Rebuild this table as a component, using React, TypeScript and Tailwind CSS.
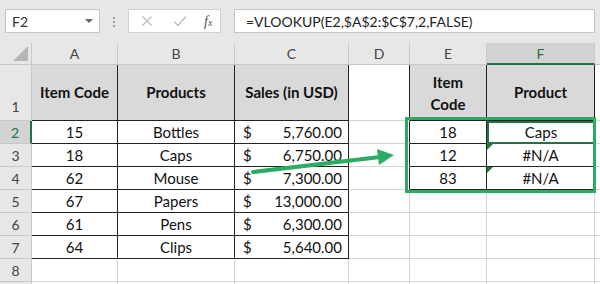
const cols = ["A", "B", "C", "D", "E", "F"];

const rows = [
  { n: 2, a: "15", b: "Bottles", c: "5,760.00", e: "18", f: "Caps" },
  { n: 3, a: "18", b: "Caps", c: "6,750.00", e: "12", f: "#N/A" },
  { n: 4, a: "62", b: "Mouse", c: "7,300.00", e: "83", f: "#N/A" },
  { n: 5, a: "67", b: "Papers", c: "13,000.00" },
  { n: 6, a: "61", b: "Pens", c: "6,300.00" },
  { n: 7, a: "64", b: "Clips", c: "5,640.00" },
  { n: 8 },
  { n: 9 },
];

const font = { fontFamily: "Lato, 'Liberation Sans', sans-serif" };

function ErrorMark() {
  return (
    <span className="absolute left-0 top-0 h-0 w-0 border-t-[6px] border-r-[6px] border-t-[#1e7b3c] border-r-transparent" />
  );
}

export default function App() {
  return (
    <div className="h-[284px] w-[600px] overflow-hidden bg-white text-[15px] text-[#111]" style={font}>
      {/* formula bar */}
      <div className="flex h-[43px] items-start bg-[#e7e7e7] pt-[9px]">
        <div className="ml-[5px] flex h-[24px] w-[95px] items-center justify-between border border-[#c6c6c6] bg-white pl-[6px] pr-[6px] text-[14px] text-[#333]">
          <span>F2</span>
          <span className="h-0 w-0 border-x-[4px] border-t-[4px] border-x-transparent border-t-[#666]" />
        </div>
        <div className="mx-[13px] mt-[8px] flex flex-col gap-[2px]">
          <span className="h-[2px] w-[2px] bg-[#a0a0a0]" />
          <span className="h-[2px] w-[2px] bg-[#a0a0a0]" />
          <span className="h-[2px] w-[2px] bg-[#a0a0a0]" />
        </div>
        <div className="flex h-[24px] w-[93px] items-center border border-[#d0d0d0] bg-white text-[#bdbdbd]">
          <svg width="12" height="12" viewBox="0 0 12 12" className="ml-[12px]">
            <path d="M1.5 1.5 L10.5 10.5 M10.5 1.5 L1.5 10.5" stroke="#bdbdbd" strokeWidth="1.3" fill="none" />
          </svg>
          <svg width="14" height="12" viewBox="0 0 14 12" className="ml-[20px]">
            <path d="M1 6.5 L5 10.5 L13 1.5" stroke="#bdbdbd" strokeWidth="1.3" fill="none" />
          </svg>
          <span className="ml-[17px] text-[14px] italic text-[#555]" style={{ fontFamily: "'Liberation Serif', serif" }}>
            f<span className="text-[10px]">x</span>
          </span>
        </div>
        <div className="ml-[13px] flex h-[24px] w-[361px] items-center border border-[#c6c6c6] bg-white pl-[11px] text-[14px] text-[#222]">
          =VLOOKUP(E2,$A$2:$C$7,2,FALSE)
        </div>
      </div>

      {/* sheet */}
      <div className="relative">
        <div className="grid grid-cols-[32px_86px_117px_114px_61px_77px_108px_5px] grid-rows-[22px_56px_repeat(8,23px)]">
          {/* column headers */}
          <div className="relative border-b border-r border-[#c8c8c8] bg-[#e7e7e7]">
            <span className="absolute bottom-[3px] right-[3px] h-0 w-0 border-b-[15px] border-l-[15px] border-b-[#b5b5b5] border-l-transparent" />
          </div>
          {cols.map((c) =>
            c === "F" ? (
              <div key={c} className="flex items-center justify-center border-b-2 border-r border-b-[#217346] border-r-[#c8c8c8] bg-[#d3d3d3] text-[14px] text-[#217346]">
                {c}
              </div>
            ) : (
              <div key={c} className="flex items-center justify-center border-b border-r border-[#c8c8c8] bg-[#e7e7e7] text-[14px] text-[#444]">
                {c}
              </div>
            )
          )}
          <div className="border-b border-[#c8c8c8] bg-[#e7e7e7]" />

          {/* row 1 */}
          <div className="flex items-end justify-center border-b border-r border-[#c8c8c8] bg-[#e7e7e7] pb-[3px] text-[14px] text-[#444]">1</div>
          <div className="flex items-center justify-center border-b border-r border-[#222] bg-[#d9d9d9] font-bold">Item Code</div>
          <div className="flex items-center justify-center border-b border-r border-[#222] bg-[#d9d9d9] font-bold">Products</div>
          <div className="flex items-center justify-center border-b border-r border-[#222] bg-[#d9d9d9] font-bold">Sales (in USD)</div>
          <div className="border-b border-r border-b-[#d4d4d4] border-r-[#222]" />
          <div className="flex items-center justify-center border-b border-r border-[#222] bg-[#d9d9d9] text-center font-bold leading-[22px]">
            Item
            <br />
            Code
          </div>
          <div className="flex items-center justify-center border-b border-r border-[#222] bg-[#d9d9d9] font-bold">Product</div>
          <div className="border-b border-[#d4d4d4]" />

          {rows.map((r) => {
            const inMain = r.n <= 7;
            const inLookup = r.n <= 4;
            const main = inMain ? "border-[#222]" : "border-[#d4d4d4]";
            const side = inLookup ? "border-[#222]" : "border-[#d4d4d4]";
            return [
              <div
                key={`h${r.n}`}
                className={`flex items-center justify-center border-b text-[14px] ${
                  r.n === 2
                    ? "border-r-2 border-b-[#c8c8c8] border-r-[#217346] bg-[#d3d3d3] text-[#217346]"
                    : "border-r border-[#c8c8c8] bg-[#e7e7e7] text-[#444]"
                }`}
              >
                {r.n < 9 ? r.n : null}
              </div>,
              <div key={`a${r.n}`} className={`flex items-center justify-center border-b border-r ${main}`}>{r.a}</div>,
              <div key={`b${r.n}`} className={`flex items-center justify-center border-b border-r ${main}`}>{r.b}</div>,
              <div key={`c${r.n}`} className={`flex items-center justify-between border-b border-r pl-[8px] pr-[6px] ${main}`}>
                {r.c && (
                  <>
                    <span>$</span>
                    <span>{r.c}</span>
                  </>
                )}
              </div>,
              <div
                key={`d${r.n}`}
                className={`border-b border-r border-b-[#d4d4d4] ${inLookup ? "border-r-[#222]" : "border-r-[#d4d4d4]"}`}
              />,
              <div key={`e${r.n}`} className={`flex items-center justify-center border-b border-r ${side}`}>{r.e}</div>,
              <div
                key={`f${r.n}`}
                className={`relative flex items-center justify-center ${
                  r.n === 2 ? "border-2 border-[#217346]" : `border-b border-r ${side}`
                }`}
              >
                {(r.n === 3 || r.n === 4) && <ErrorMark />}
                {r.f}
              </div>,
              <div key={`g${r.n}`} className="border-b border-[#d4d4d4]" />,
            ];
          })}
        </div>

        {/* highlight box over the lookup results */}
        <div className="pointer-events-none absolute left-[405px] top-[74px] h-[76px] w-[191px] border-[3px] border-[#2aad62]" />

        {/* arrow */}
        <svg className="pointer-events-none absolute left-0 top-0" width="600" height="241" viewBox="0 0 600 241">
          <path d="M253 129 L380 114" stroke="#2aad62" strokeWidth="4" strokeLinecap="round" fill="none" />
          <path d="M377 106 L394 112 L379 122 Z" fill="#2aad62" />
        </svg>
      </div>
    </div>
  );
}
